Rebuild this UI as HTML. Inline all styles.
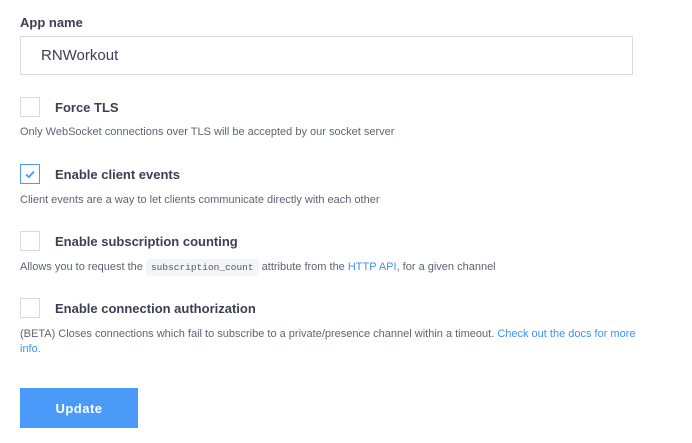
<!DOCTYPE html>
<html><head><style>
body{margin:0;width:692px;height:443px;background:#fff;font-family:"Liberation Sans",sans-serif;color:#3b4150;position:relative;overflow:hidden}
.a{position:absolute;white-space:nowrap}
.lbl{font-size:13px;font-weight:bold;color:#3b4150}
.cb{position:absolute;left:20px;width:18px;height:18px;border:1px solid #d3dbe5;background:#fff}
.d{font-size:11px;color:#5d6573}
.ln{color:#3d92f5}
code{font-family:"Liberation Mono",monospace;font-size:9.5px;background:#f3f5f8;padding:3px 5px;border-radius:3px;color:#555}
</style></head><body>
<div class="a lbl" style="left:20px;top:15px">App name</div>
<div class="a" style="left:20px;top:36px;width:611px;height:37px;border:1px solid #d3dbe5"></div>
<div class="a" style="left:41px;top:47px;font-size:15px;color:#3b4150">RNWorkout</div>

<div class="cb" style="top:97px"></div>
<div class="a lbl" style="left:55px;top:100px">Force TLS</div>
<div class="a d" style="left:20px;top:126px">Only WebSocket connections over TLS will be accepted by our socket server</div>

<div class="cb" style="top:164px;border-color:#4a9af9"><svg width="18" height="18" style="position:absolute;left:0;top:0"><path d="M5 9.5 L8 12 L13 6.5" stroke="#4a9af9" stroke-width="1.8" fill="none"/></svg></div>
<div class="a lbl" style="left:55px;top:167px">Enable client events</div>
<div class="a d" style="left:20px;top:194px">Client events are a way to let clients communicate directly with each other</div>

<div class="cb" style="top:231px"></div>
<div class="a lbl" style="left:55px;top:234px">Enable subscription counting</div>
<div class="a d" style="left:20px;top:261px">Allows you to request the <code>subscription_count</code> attribute from the <span class="ln">HTTP API</span>, for a given channel</div>

<div class="cb" style="top:298px"></div>
<div class="a lbl" style="left:55px;top:301px">Enable connection authorization</div>
<div class="a d" style="left:20px;top:327px;line-height:15px;white-space:normal;width:620px">(BETA) Closes connections which fail to subscribe to a private/presence channel within a timeout. <span class="ln">Check out the docs for more info.</span></div>

<div class="a" style="left:20px;top:388px;width:118px;height:40px;background:#4a9af9;color:#fff;font-size:13px;font-weight:bold;text-align:center;line-height:42px;letter-spacing:0.5px">Update</div>
</body></html>
